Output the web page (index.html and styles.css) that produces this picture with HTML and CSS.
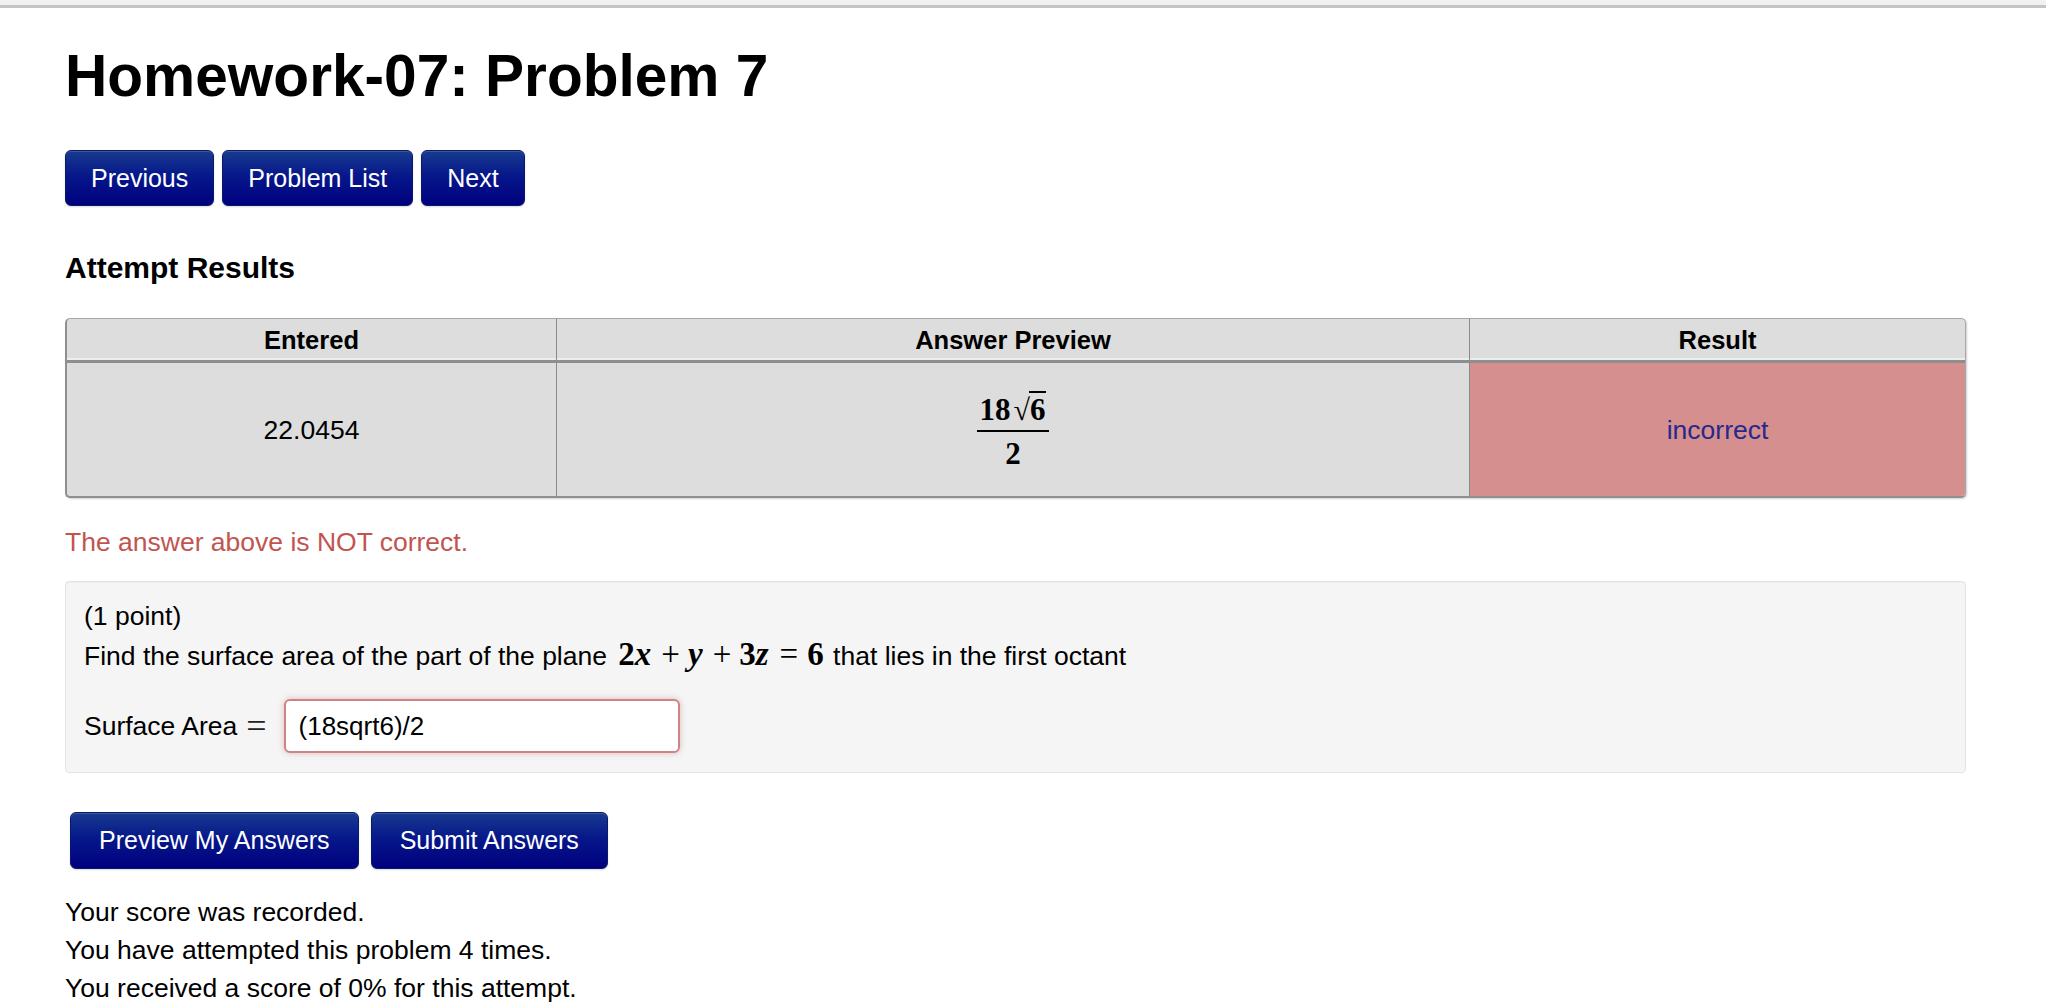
FILE: index.html
```html
<!DOCTYPE html>
<html lang="en">
<head>
<meta charset="utf-8">
<title>Homework-07: Problem 7</title>
<link rel="stylesheet" href="styles.css">
</head>
<body>
<div class="topbar"></div>
<main class="page">
  <h1 class="title">Homework-07: Problem 7</h1>
  <nav class="nav">
    <a class="btn" href="#">Previous</a>
    <a class="btn" href="#">Problem List</a>
    <a class="btn" href="#">Next</a>
  </nav>

  <h2 class="section-title">Attempt Results</h2>
  <table class="results">
    <thead>
      <tr>
        <th class="col-entered">Entered</th>
        <th class="col-preview">Answer Preview</th>
        <th class="col-result">Result</th>
      </tr>
    </thead>
    <tbody>
      <tr>
        <td>22.0454</td>
        <td>
          <span class="frac">
            <span class="num">18<span class="sqrt"><span class="radical">√</span><span class="radicand">6</span></span></span>
            <span class="den">2</span>
          </span>
        </td>
        <td class="incorrect">incorrect</td>
      </tr>
    </tbody>
  </table>

  <p class="msg">The answer above is NOT correct.</p>

  <div class="problem">
    <p class="statement">(1 point)<br>Find the surface area of the part of the plane <span class="math"><span class="mn">2</span><span class="mi">x</span><span class="mo">+</span><span class="mi">y</span><span class="mo">+</span><span class="mn">3</span><span class="mi">z</span><span class="mo rel">=</span><span class="mn">6</span></span> that lies in the first octant</p>
    <div class="answer-row">
      <span class="label">Surface Area</span><span class="eq">=</span>
      <input class="answer" type="text" value="(18sqrt6)/2">
    </div>
  </div>

  <div class="actions">
    <button class="btn btn-lg" type="button">Preview My Answers</button>
    <button class="btn btn-lg" type="button">Submit Answers</button>
  </div>

  <div class="score">
    <div>Your score was recorded.</div>
    <div>You have attempted this problem 4 times.</div>
    <div>You received a score of 0% for this attempt.</div>
  </div>
</main>
</body>
</html>
```

FILE: styles.css
```css
html, body {
  margin: 0;
  padding: 0;
  background: #ffffff;
}

body {
  font-family: "Liberation Sans", Arial, sans-serif;
  font-size: 26.5px;
  line-height: 38px;
  color: #000;
}

.topbar {
  height: 5px;
  background: #f1f1f1;
  border-bottom: 3px solid #c4c4c4;
}

.page {
  padding: 0 80px 0 65px;
}

.title {
  margin: 36px 0 0;
  font-size: 58.6px;
  line-height: 64px;
  font-weight: bold;
}

.nav {
  display: flex;
  gap: 8px;
  margin-top: 42px;
}

.btn {
  display: inline-flex;
  align-items: center;
  justify-content: center;
  box-sizing: border-box;
  height: 56px;
  padding: 0 25px;
  font-family: "Liberation Sans", Arial, sans-serif;
  font-size: 25px;
  color: #fff;
  text-decoration: none;
  background: linear-gradient(to bottom, #183a8f 0%, #06188a 45%, #00007f 100%);
  border: 1px solid #0b1a66;
  border-radius: 6px;
  box-shadow: inset 0 1px 0 rgba(255, 255, 255, 0.15), 0 1px 2px rgba(0, 0, 0, 0.15);
  cursor: pointer;
}

.section-title {
  margin: 44px 0 0;
  font-size: 30px;
  line-height: 36px;
  font-weight: bold;
}

.results {
  width: 100%;
  margin-top: 32px;
  border-collapse: separate;
  border-spacing: 0;
  background: #dddddd;
  border: 1px solid #a8a8a8;
  border-left: 2px solid #8f8f8f;
  border-bottom: 2px solid #8f8f8f;
  border-radius: 5px;
  box-shadow: 1px 1px 2px rgba(0, 0, 0, 0.2);
  text-align: center;
}

.results th {
  height: 41px;
  padding: 0;
  font-size: 25.5px;
  font-weight: bold;
  border-bottom: 3px solid #8e8e8e;
  box-shadow: inset 0 -2px 0 #eeeeee;
}

.results th + th,
.results td + td {
  border-left: 1px solid #8a8a8a;
}

.col-entered { width: 489px; }
.col-preview { width: 912px; }

.results td {
  height: 133px;
  padding: 0;
  vertical-align: middle;
}

.results td.incorrect {
  background: #d68f8f;
  color: #26288a;
  border-bottom-right-radius: 4px;
}

.frac {
  display: inline-flex;
  flex-direction: column;
  align-items: center;
  vertical-align: middle;
  font-family: "Liberation Serif", "Times New Roman", serif;
  font-weight: bold;
  font-size: 31px;
  line-height: 1;
}

.num {
  display: flex;
  align-items: flex-end;
  padding: 0 3px 5px;
  border-bottom: 2px solid #000;
}

.sqrt {
  display: inline-flex;
  align-items: flex-end;
  margin-left: 2px;
}

.radical {
  font-weight: normal;
  font-size: 30px;
  margin-left: 1px;
}

.radicand {
  border-top: 2px solid #000;
  padding: 1px 1px 0 1px;
  margin-left: -1px;
}

.den {
  padding-top: 6px;
}

.msg {
  margin: 25px 0 0;
  color: #c25450;
}

.problem {
  margin-top: 20px;
  padding: 15px 18px 19px;
  background: #f5f5f5;
  border: 1px solid #e3e3e3;
  border-radius: 4px;
  box-shadow: inset 0 1px 1px rgba(0, 0, 0, 0.03);
}

.statement {
  margin: 0;
}

.math {
  font-family: "Liberation Serif", "Times New Roman", serif;
  font-size: 33px;
  font-weight: bold;
  white-space: nowrap;
  margin: 0 2px 0 4px;
}

.mi {
  font-style: italic;
  padding-right: 2px;
}

.mo {
  margin: 0 8px;
  font-weight: normal;
}

.mo.rel {
  margin: 0 9px;
}

.answer-row {
  display: flex;
  align-items: center;
  margin-top: 24px;
}

.eq {
  font-family: "Liberation Serif", "Times New Roman", serif;
  font-size: 36px;
  line-height: 38px;
  margin: 0 17px 0 9px;
  color: #222;
}

.answer {
  box-sizing: border-box;
  width: 396px;
  height: 54px;
  padding: 0 13px;
  font-family: "Liberation Sans", Arial, sans-serif;
  font-size: 26px;
  color: #000;
  background: #fff;
  border: 2px solid #cc8585;
  border-radius: 6px;
  box-shadow: 0 0 6px rgba(200, 110, 110, 0.45);
  outline: none;
}

.actions {
  display: flex;
  gap: 12px;
  margin: 39px 0 0 5px;
}

.btn-lg {
  height: 57px;
  padding: 0 28px;
}

.score {
  margin-top: 24px;
}
```
